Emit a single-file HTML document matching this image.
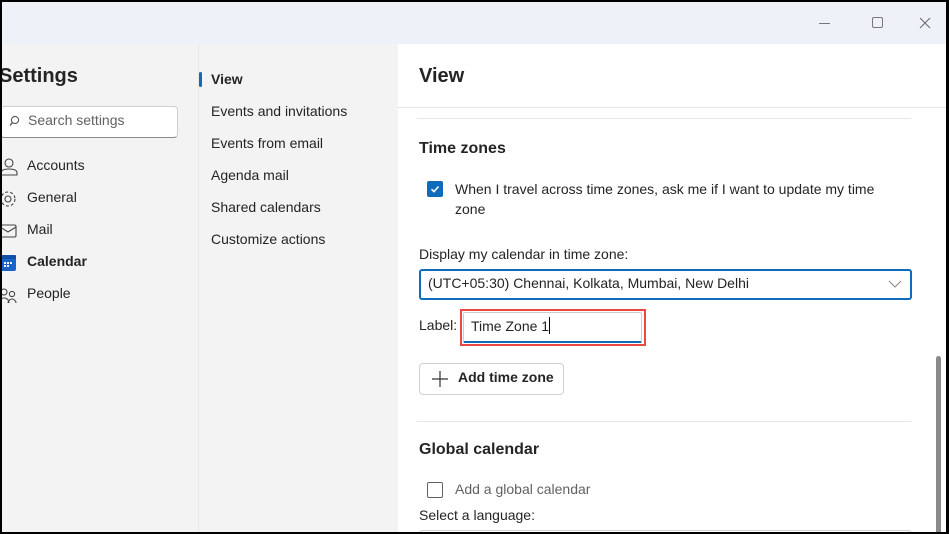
<!DOCTYPE html>
<html><head><meta charset="utf-8"><style>
*{margin:0;padding:0;box-sizing:border-box}
body{width:949px;height:534px;overflow:hidden;background:#000;font-family:"Segoe UI","Liberation Sans",sans-serif;color:#242424;position:relative}
.win{position:absolute;left:2px;top:2px;width:944px;height:530px;background:#f3f3f3;overflow:hidden}
.tb{position:absolute;left:0;top:0;width:944px;height:42px;background:#eef2f8}
.a{position:absolute;white-space:nowrap}
.mid{position:absolute;left:196px;top:42px;width:1px;height:490px;background:#e8e8e8}
.right{position:absolute;left:396px;top:42px;width:548px;height:490px;background:#fff}
.nav{font-size:14px;color:#242424}
.sub{font-size:14px;color:#242424}
</style></head><body>
<div class="win">
<div class="tb"></div>
<div class="a" style="left:817px;top:21px;width:11px;height:1px;background:#777"></div>
<div class="a" style="left:870px;top:15px;width:11px;height:11px;border:1px solid #777;border-radius:2px"></div>
<svg class="a" style="left:917px;top:15px" width="12" height="12"><path d="M1 1L11 11M11 1L1 11" stroke="#666" stroke-width="1"/></svg>

<div class="a" style="left:-3px;top:63px;font-size:20px;font-weight:600;color:#242424">Settings</div>
<div class="a" style="left:-2px;top:104px;width:178px;height:32px;background:#fff;border:1px solid #d0d0d0;border-bottom-color:#8a8a8a;border-radius:4px"></div>
<svg class="a" style="left:7px;top:113px" width="12" height="14"><circle cx="6" cy="5" r="3.6" fill="none" stroke="#555" stroke-width="1.1"/><path d="M3.4 7.6L1 10.5" stroke="#555" stroke-width="1.3"/></svg>
<div class="a" style="left:26px;top:110px;font-size:14px;color:#616161">Search settings</div>

<svg class="a" style="left:-2px;top:156px" width="18" height="18"><circle cx="9" cy="5" r="4" fill="none" stroke="#444" stroke-width="1.1"/><path d="M1 17v-2c0-3 3-4 8-4s8 1 8 4v2z" fill="none" stroke="#444" stroke-width="1.1"/></svg>
<div class="a nav" style="left:25px;top:155px">Accounts</div>
<svg class="a" style="left:-4px;top:187px" width="20" height="20"><circle cx="10" cy="10" r="3" fill="none" stroke="#444" stroke-width="1.1"/><circle cx="10" cy="10" r="7" fill="none" stroke="#444" stroke-width="1.1" stroke-dasharray="3 2"/></svg>
<div class="a nav" style="left:25px;top:187px">General</div>
<svg class="a" style="left:-3px;top:222px" width="18" height="14"><rect x="1" y="1" width="16" height="12" rx="1.5" fill="none" stroke="#444" stroke-width="1.1"/><path d="M1 3l8 5 8-5" fill="none" stroke="#444" stroke-width="1.1"/></svg>
<div class="a nav" style="left:25px;top:219px">Mail</div>
<svg class="a" style="left:-2px;top:253px" width="16" height="16"><rect x="0" y="0" width="16" height="16" rx="2" fill="#1a63c9"/><rect x="0" y="0" width="16" height="4" rx="1" fill="#0f4fa8"/><g fill="#fff"><rect x="4" y="7" width="2" height="2"/><rect x="7" y="7" width="2" height="2"/><rect x="10" y="7" width="2" height="2"/><rect x="4" y="10" width="2" height="2"/><rect x="7" y="10" width="2" height="2"/></g></svg>
<div class="a nav" style="left:25px;top:251px;font-weight:700">Calendar</div>
<svg class="a" style="left:-3px;top:285px" width="20" height="18"><circle cx="5" cy="5" r="3" fill="none" stroke="#444" stroke-width="1.1"/><circle cx="13" cy="7" r="2.6" fill="none" stroke="#444" stroke-width="1.1"/><path d="M0 16c0-3 2-5 5-5s5 2 5 5M9 16c0-2 2-4 4-4s4 2 4 4" fill="none" stroke="#444" stroke-width="1.1"/></svg>
<div class="a nav" style="left:25px;top:283px">People</div>

<div class="mid"></div>
<div class="a" style="left:197px;top:70px;width:3px;height:15px;background:#0f6cbd;border-radius:2px"></div>
<div class="a sub" style="left:209px;top:69px;font-weight:700">View</div>
<div class="a sub" style="left:209px;top:101px">Events and invitations</div>
<div class="a sub" style="left:209px;top:133px">Events from email</div>
<div class="a sub" style="left:209px;top:165px">Agenda mail</div>
<div class="a sub" style="left:209px;top:197px">Shared calendars</div>
<div class="a sub" style="left:209px;top:229px">Customize actions</div>

<div class="right">
 <div class="a" style="left:21px;top:21px;font-size:20px;font-weight:600">View</div>
 <div class="a" style="left:0;top:63px;width:548px;height:1px;background:#e6e6e6"></div>
 <div class="a" style="left:19px;top:74px;width:494px;height:1px;background:#e6e6e6"></div>
 <div class="a" style="left:21px;top:96px;font-size:16px;font-weight:600">Time zones</div>
 <div class="a" style="left:29px;top:137px;width:16px;height:16px;background:#0f6cbd;border-radius:2px"></div>
 <svg class="a" style="left:31px;top:139px" width="12" height="12"><path d="M2.5 6.2L5 8.6 9.5 3.5" fill="none" stroke="#fff" stroke-width="1.6"/></svg>
 <div class="a" style="left:57px;top:135px;font-size:14px;line-height:20px;white-space:normal;width:440px">When I travel across time zones, ask me if I want to update my time zone</div>
 <div class="a" style="left:21px;top:202px;font-size:14px">Display my calendar in time zone:</div>
 <div class="a" style="left:21px;top:225px;width:493px;height:31px;border:2px solid #0f6cbd;border-radius:3px"></div>
 <div class="a" style="left:30px;top:231px;font-size:14px">(UTC+05:30) Chennai, Kolkata, Mumbai, New Delhi</div>
 <svg class="a" style="left:490px;top:236px" width="14" height="9"><path d="M1 1l6 6 6-6" fill="none" stroke="#888" stroke-width="1"/></svg>
 <div class="a" style="left:21px;top:273px;font-size:14px">Label:</div>
 <div class="a" style="left:62px;top:265px;width:186px;height:37px;border:2px solid #e84a43"></div>
 <div class="a" style="left:65px;top:268px;width:179px;height:31px;border:1px solid #ccc;border-bottom:2px solid #0f6cbd;border-radius:2px;background:#fff"></div>
 <div class="a" style="left:73px;top:273px;font-size:14px">Time Zone 1<span style="display:inline-block;width:1px;height:17px;background:#000;vertical-align:-3px"></span></div>
 <div class="a" style="left:21px;top:319px;width:145px;height:32px;border:1px solid #d1d1d1;border-radius:4px"></div>
 <svg class="a" style="left:34px;top:327px" width="16" height="16"><path d="M8 0v16M0 8h16" stroke="#333" stroke-width="1.2"/></svg>
 <div class="a" style="left:60px;top:325px;font-size:14px;font-weight:700">Add time zone</div>
 <div class="a" style="left:19px;top:377px;width:494px;height:1px;background:#e6e6e6"></div>
 <div class="a" style="left:21px;top:397px;font-size:16px;font-weight:600">Global calendar</div>
 <div class="a" style="left:29px;top:438px;width:16px;height:16px;border:1px solid #616161;border-radius:2px"></div>
 <div class="a" style="left:57px;top:437px;font-size:14px;color:#616161">Add a global calendar</div>
 <div class="a" style="left:21px;top:463px;font-size:14px">Select a language:</div>
 <div class="a" style="left:21px;top:486px;width:493px;height:20px;border:1px solid #d1d1d1;border-radius:4px"></div>
 <div class="a" style="left:538px;top:312px;width:5px;height:180px;background:#8a8a8a;border-radius:3px"></div>
</div>
</div>
</body></html>
